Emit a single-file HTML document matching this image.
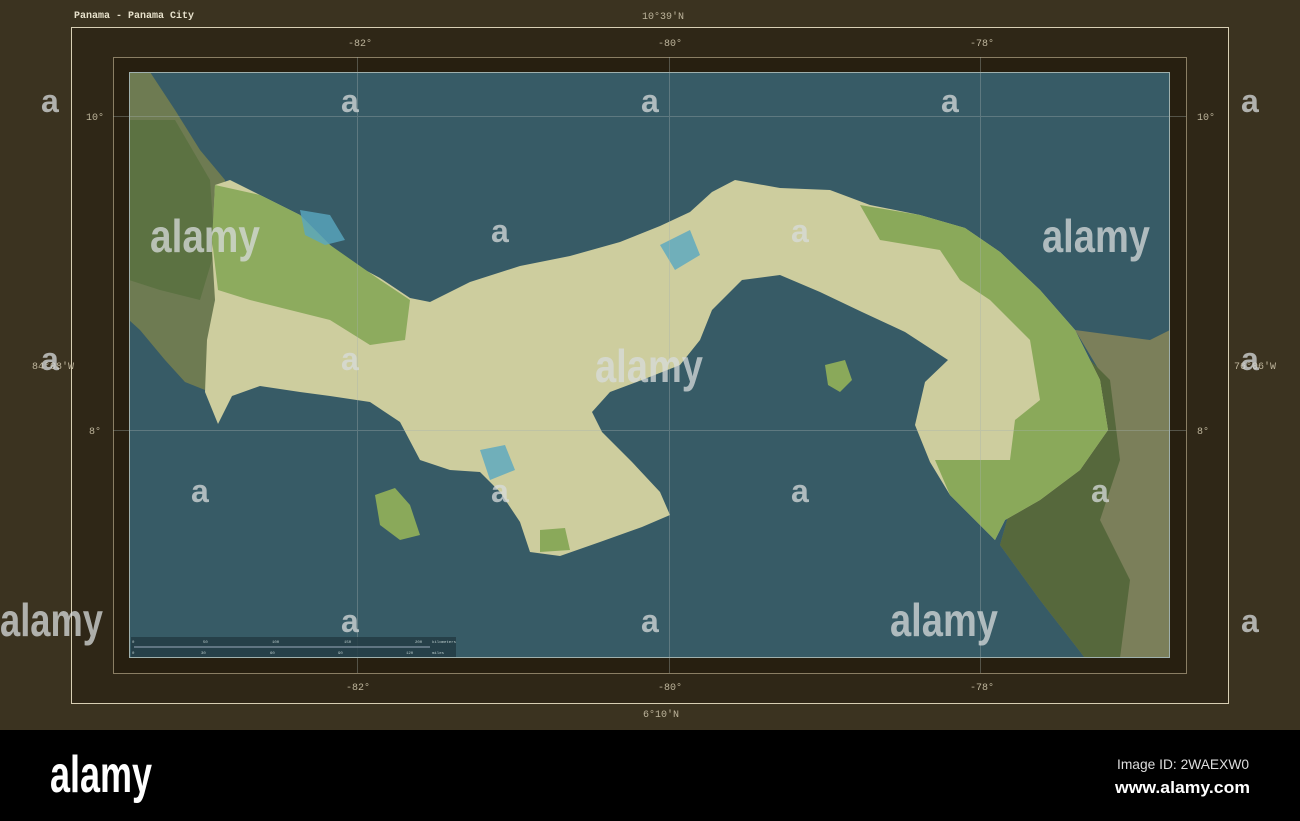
<!DOCTYPE html>
<html><head><meta charset="utf-8"><style>
html,body{margin:0;padding:0;width:1300px;height:821px;overflow:hidden;background:#000;font-family:"Liberation Sans",sans-serif}
.mono{font-family:"Liberation Mono","DejaVu Sans Mono",monospace}
</style></head><body>
<svg width="1300" height="821" xmlns="http://www.w3.org/2000/svg">
<rect width="1300" height="730" fill="#3b3320"/>
<rect x="71.5" y="27.5" width="1157" height="676" fill="#2f2717" stroke="#d8cfb4" stroke-width="1"/>
<rect x="113.5" y="57.5" width="1073" height="616" fill="#271f10" stroke="#8a7e64" stroke-width="1"/>
<rect x="129" y="72" width="1041" height="586" fill="#375b66"/>
<path d="M129,72 L150,72 L175,110 L200,150 L225,180 L215,250 L215,300 L205,390 L185,382 L165,360 L140,330 L129,320 Z" fill="#6e7b52"/>
<path d="M129,120 L175,120 L210,180 L215,250 L200,300 L160,290 L129,280 Z" fill="#57703f" opacity=".8"/>
<path d="M1075,330 L1150,340 L1170,330 L1170,658 L1085,658 L1040,600 L1000,545 L1010,510 L1060,470 L1100,430 L1105,380 Z" fill="#7b7f5a"/>
<path d="M1070,340 L1110,380 L1120,460 L1100,520 L1130,580 L1120,658 L1085,658 L1040,600 L1000,545 L1010,510 L1060,470 L1100,430 Z" fill="#56683c"/>
<path d="M215,185 L230,180 L270,200 L300,215 L330,245 L350,262 L380,278 L410,298 L430,302 L470,282 L520,266 L570,256 L620,242 L660,226 L690,212 L712,192 L735,180 L780,188 L830,190 L870,205 L920,215 L965,228 L1000,252 L1040,290 L1075,330 L1100,380 L1108,430 L1080,470 L1040,500 L1005,520 L995,540 L975,520 L950,495 L930,462 L915,425 L925,382 L948,360 L905,332 L862,312 L820,292 L780,275 L742,280 L712,310 L700,340 L680,365 L642,380 L610,392 L592,412 L602,432 L632,462 L660,492 L670,515 L642,527 L600,542 L560,556 L530,552 L520,522 L500,492 L480,472 L450,470 L420,460 L400,422 L370,402 L330,396 L300,392 L260,386 L232,396 L218,424 L205,392 L207,340 L215,300 L212,250 Z" fill="#cdcd9e"/>
<path d="M215,185 L260,195 L300,215 L330,245 L380,280 L410,300 L405,340 L370,345 L330,320 L290,310 L250,300 L218,290 L212,240 Z" fill="#8dab5e"/>
<path d="M860,205 L920,215 L965,228 L1000,252 L1040,290 L1075,330 L1100,380 L1108,430 L1080,470 L1040,500 L1005,520 L995,540 L975,520 L950,495 L935,460 L1010,460 L1015,420 L1040,400 L1030,340 L990,300 L960,280 L940,250 L880,240 Z" fill="#8aa95a"/>
<path d="M375,495 L395,488 L410,505 L420,535 L400,540 L380,525 Z" fill="#8aa95a"/>
<path d="M825,365 L845,360 L852,380 L840,392 L828,385 Z" fill="#8aa95a"/>
<path d="M540,530 L565,528 L570,550 L540,552 Z" fill="#8aa95a"/>
<path d="M300,210 L330,215 L345,240 L325,245 L305,235 Z" fill="#59a7c0" opacity=".8"/>
<path d="M660,245 L690,230 L700,255 L675,270 Z" fill="#59a7c0" opacity=".8"/>
<path d="M480,450 L505,445 L515,470 L490,480 Z" fill="#59a7c0" opacity=".8"/>
<g stroke="#a8b3b0" stroke-width="1" opacity=".35">
<line x1="357.5" y1="57" x2="357.5" y2="673"/><line x1="669.5" y1="57" x2="669.5" y2="673"/><line x1="980.5" y1="57" x2="980.5" y2="673"/>
<line x1="113" y1="116.5" x2="1186" y2="116.5"/><line x1="113" y1="430.5" x2="1186" y2="430.5"/>
</g>
<rect x="129.5" y="72.5" width="1040" height="585" fill="none" stroke="#9fb0ad" stroke-width="1"/>
<rect x="131" y="637" width="325" height="20" fill="#233c44" opacity=".85"/>
<line x1="134" y1="647" x2="430" y2="647" stroke="#9ab" stroke-width="1"/>
<g class="mono" font-size="4" fill="#bcc">
<text x="132" y="643">0</text><text x="203" y="643">50</text><text x="272" y="643">100</text><text x="344" y="643">150</text><text x="415" y="643">200</text><text x="432" y="643">kilometers</text>
<text x="132" y="654">0</text><text x="201" y="654">30</text><text x="270" y="654">60</text><text x="338" y="654">90</text><text x="406" y="654">120</text><text x="432" y="654">miles</text>
</g>
<g class="mono" font-size="10" fill="#e8e2cc">
<text x="74" y="18" font-weight="bold">Panama - Panama City</text>
</g>
<g class="mono" font-size="10" fill="#bdb49b">
<text x="642" y="19">10°39′N</text><text x="643" y="717">6°10′N</text>
<text x="348" y="46">-82°</text><text x="658" y="46">-80°</text><text x="970" y="46">-78°</text>
<text x="346" y="690">-82°</text><text x="658" y="690">-80°</text><text x="970" y="690">-78°</text>
<text x="86" y="120">10°</text><text x="1197" y="120">10°</text>
<text x="89" y="434">8°</text><text x="1197" y="434">8°</text>
<text x="32" y="369">84°08′W</text><text x="1234" y="369">76°06′W</text>
</g>
<g font-family="Liberation Sans Narrow,Liberation Sans,sans-serif" font-weight="bold" fill="#d8dcdc" opacity=".75">
<text x="150" y="252" font-size="46" textLength="110" lengthAdjust="spacingAndGlyphs">alamy</text>
<text x="1042" y="252" font-size="46" textLength="108" lengthAdjust="spacingAndGlyphs">alamy</text>
<text x="595" y="382" font-size="46" textLength="108" lengthAdjust="spacingAndGlyphs">alamy</text>
<text x="0" y="636" font-size="46" textLength="103" lengthAdjust="spacingAndGlyphs">alamy</text>
<text x="890" y="636" font-size="46" textLength="108" lengthAdjust="spacingAndGlyphs">alamy</text>
<g font-size="32">
<text x="41" y="112">a</text><text x="341" y="112">a</text><text x="641" y="112">a</text><text x="941" y="112">a</text><text x="1241" y="112">a</text>
<text x="491" y="242">a</text><text x="791" y="242">a</text>
<text x="41" y="370">a</text><text x="341" y="370">a</text><text x="1241" y="370">a</text>
<text x="191" y="502">a</text><text x="491" y="502">a</text><text x="791" y="502">a</text><text x="1091" y="502">a</text>
<text x="341" y="632">a</text><text x="641" y="632">a</text><text x="1241" y="632">a</text>
</g></g>
<rect x="0" y="730" width="1300" height="91" fill="#000"/>
<text x="50" y="792" font-family="Liberation Sans Narrow,Liberation Sans,sans-serif" font-size="52" font-weight="bold" fill="#fff" textLength="102" lengthAdjust="spacingAndGlyphs">alamy</text>
<text x="1117" y="769" font-family="Liberation Sans Narrow,Liberation Sans,sans-serif" font-size="14" fill="#ddd" textLength="132" lengthAdjust="spacingAndGlyphs">Image ID: 2WAEXW0</text>
<text x="1115" y="793" font-family="Liberation Sans Narrow,Liberation Sans,sans-serif" font-size="17" font-weight="bold" fill="#fff" textLength="135" lengthAdjust="spacingAndGlyphs">www.alamy.com</text>
</svg>
</body></html>
